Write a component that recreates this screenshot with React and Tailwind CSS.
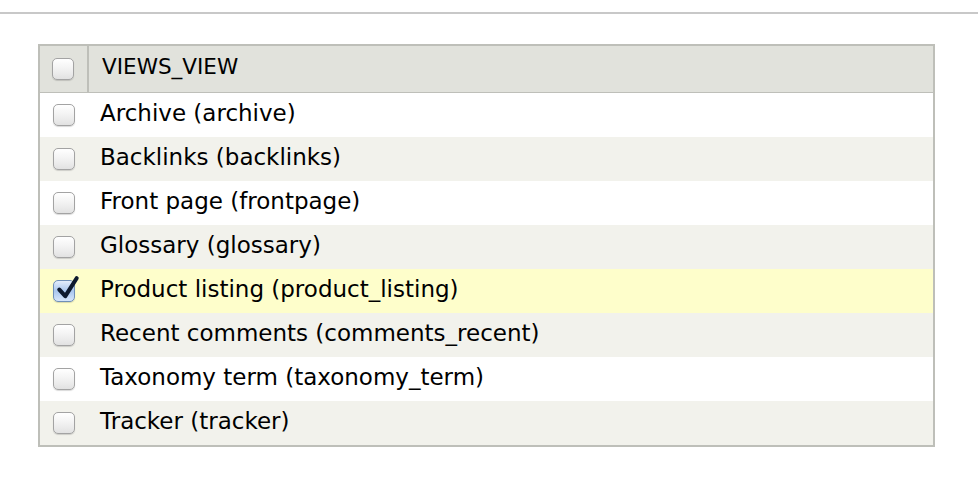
import React from 'react';

const rows = [
  { label: 'Archive (archive)' },
  { label: 'Backlinks (backlinks)' },
  { label: 'Front page (frontpage)' },
  { label: 'Glossary (glossary)' },
  { label: 'Product listing (product_listing)', checked: true },
  { label: 'Recent comments (comments_recent)' },
  { label: 'Taxonomy term (taxonomy_term)' },
  { label: 'Tracker (tracker)' },
];

const Box = ({ checked }) => (
  <span
    className={
      'relative block h-[22px] w-[22px] rounded-[5px] border shadow-[0_1px_1px_rgba(0,0,0,0.15)] ' +
      (checked
        ? 'border-[#6f8fb8] bg-gradient-to-b from-[#e4eefc] via-[#a9c6ee] to-[#d7e6fb]'
        : 'border-[#a3a3a3] bg-gradient-to-b from-[#ffffff] via-[#f2f2f2] to-[#e2e2e2]')
    }
  >
    {checked && (
      <svg viewBox="0 0 24 24" className="absolute -top-[6px] left-[1px] h-[26px] w-[26px]">
        <path d="M4 13.5 L9.5 19.5 L20 3" fill="none" stroke="#0e1a2e" strokeWidth="3.8" strokeLinecap="round" strokeLinejoin="round" />
      </svg>
    )}
  </span>
);

const App = () => {
  return (
    <div className="h-[478px] w-[978px] bg-white font-['DejaVu_Sans',sans-serif] text-[#000]">
      <div className="h-[12px]" />
      <div className="h-[2px] bg-[#c8c8c8]" />
      <div className="pl-[38px] pt-[30px]">
        <div className="w-[897px] border-2 border-[#bebfb9]">
          <div className="flex h-[47px] border-b border-[#bebfb9] bg-[#e1e2dc]">
            <div className="flex w-[49px] items-center justify-center border-r-2 border-[#bebfb9] pb-[1px] pr-[1px]">
              <Box />
            </div>
            <div className="flex items-center pb-[3px] pl-[13px] text-[21.5px]">VIEWS_VIEW</div>
          </div>
          {rows.map((row, i) => (
            <div
              key={row.label}
              className={
                'flex h-[44px] items-center ' +
                (row.checked ? 'bg-[#fefecb]' : i % 2 ? 'bg-[#f2f2ec]' : 'bg-white')
              }
            >
              <div className="flex w-[48px] justify-center">
                <Box checked={row.checked} />
              </div>
              <span className="pb-[4px] pl-[12px] text-[23px]">{row.label}</span>
            </div>
          ))}
        </div>
      </div>
    </div>
  );
};

export default App;
